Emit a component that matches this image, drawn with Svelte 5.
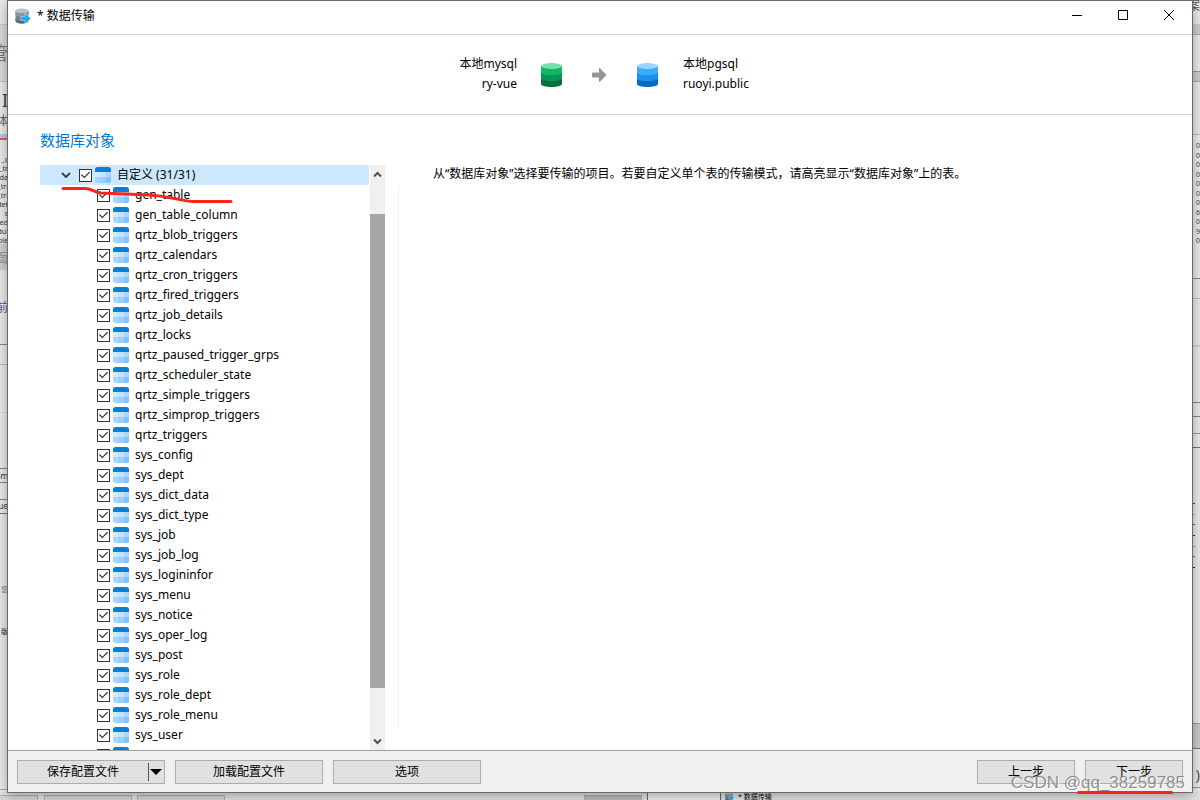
<script>
	const tables = [
		'gen_table',
		'gen_table_column',
		'qrtz_blob_triggers',
		'qrtz_calendars',
		'qrtz_cron_triggers',
		'qrtz_fired_triggers',
		'qrtz_job_details',
		'qrtz_locks',
		'qrtz_paused_trigger_grps',
		'qrtz_scheduler_state',
		'qrtz_simple_triggers',
		'qrtz_simprop_triggers',
		'qrtz_triggers',
		'sys_config',
		'sys_dept',
		'sys_dict_data',
		'sys_dict_type',
		'sys_job',
		'sys_job_log',
		'sys_logininfor',
		'sys_menu',
		'sys_notice',
		'sys_oper_log',
		'sys_post',
		'sys_role',
		'sys_role_dept',
		'sys_role_menu',
		'sys_user',
		'sys_user_post'
	];

	let items = $state(tables.map((name) => ({ name, checked: true })));
	let allChecked = $state(true);
	let open = $state(true);

	function toggleAll() {
		for (const item of items) item.checked = allChecked;
	}

	// Bits of the windows behind the dialog that stick out at its edges
	const leftLines = [
		{ y: 24, h: 1, color: '#c8c8c8' },
		{ y: 25, h: 56, color: '#dcdcdc' },
		{ y: 81, h: 1, color: '#c4c4c4' },
		{ y: 134, h: 4, color: '#b4cde4' },
		{ y: 138, h: 2, color: '#e0605a' },
		{ y: 244, h: 26, color: '#d2d2d2' },
		{ y: 344, h: 1, color: '#888' },
		{ y: 364, h: 1, color: '#bbb' },
		{ y: 412, h: 1, color: '#ddd' },
		{ y: 468, h: 1, color: '#888' },
		{ y: 482, h: 1, color: '#888' },
		{ y: 499, h: 1, color: '#888' },
		{ y: 513, h: 1, color: '#777' },
		{ y: 789, h: 1, color: '#aaa' }
	];
	const leftTexts = [
		{ y: 53, size: 18, text: '管', color: '#777' },
		{ y: 100, size: 18, text: 'I', color: '#445' },
		{ y: 121, size: 12, text: '体', color: '#666' },
		...['_c', '_tr', 'nda', '_tri', '_tri', 'det', 's', 'sed', 'dul', 'ble'].map((text, i) => ({
			y: 160 + i * 9,
			size: 7,
			text,
			color: '#333'
		})),
		{ y: 257, size: 13, text: '面', color: '#a8988c' },
		{ y: 308, size: 12, text: '前', color: '#6450a0' },
		{ y: 476, size: 8, text: '3m', color: '#333' },
		{ y: 506, size: 8, text: 'ue', color: '#333' },
		{ y: 590, size: 7, text: '您', color: '#777' },
		{ y: 632, size: 7, text: '版', color: '#222' }
	];
	const rightLines = [
		{ y: 24, h: 10, color: '#d0d0d0' },
		{ y: 34, h: 1, color: '#aaa' },
		{ y: 71, h: 1, color: '#999' },
		{ y: 72, h: 9, color: '#d0d0d0' },
		{ y: 81, h: 1, color: '#aaa' },
		{ y: 134, h: 1, color: '#bbb' },
		{ y: 278, h: 1, color: '#888' },
		{ y: 298, h: 1, color: '#bbb' },
		{ y: 345, h: 2, color: '#d5d5d5' },
		{ y: 402, h: 1, color: '#888' },
		{ y: 416, h: 1, color: '#888' },
		{ y: 433, h: 1, color: '#999' },
		{ y: 447, h: 1, color: '#777' },
		{ y: 503, h: 1, w: 3, color: '#446' },
		{ y: 514, h: 1, w: 3, color: '#aaa' },
		{ y: 524, h: 1, w: 3, color: '#555' },
		{ y: 535, h: 1, w: 3, color: '#335' },
		{ y: 546, h: 1, w: 3, color: '#999' },
		{ y: 556, h: 1, w: 3, color: '#666' },
		{ y: 567, h: 1, w: 3, color: '#223' },
		{ y: 723, h: 1, color: '#999' },
		{ y: 724, h: 24, color: '#ccc' },
		{ y: 748, h: 1, color: '#777' },
		{ y: 787, h: 1, color: '#999' }
	];
	const rightTexts = [
		{ y: 6, size: 12, text: '案', color: '#555' },
		...['0', '0', '0', '0', '0', '0', '0', '6', '0', '9', '0'].map((text, i) => ({
			y: 146 + Math.round(i * 9.5),
			size: 7,
			text,
			color: '#444'
		})),
		{ y: 774, size: 15, text: ')', color: '#555' }
	];
</script>

{#snippet strip(side, lines, texts)}
	<div class="strip {side}" aria-hidden="true">
		{#each lines as line}
			<i style="top: {line.y}px; width: {line.w ?? 8}px; height: {line.h}px; background: {line.color}"></i>
		{/each}
		{#each texts as t}
			<span style="top: {t.y - 10}px; font-size: {t.size}px; color: {t.color}">{t.text}</span>
		{/each}
	</div>
{/snippet}

{#snippet transferIcon(size)}
	<svg width={size} height={size} viewBox="0 0 16 16" aria-hidden="true">
		<path d="M.500 3v9.500C.500 14.500 3.500 15.500 7 15.500s6.500-1 6.500-3V3z" fill="#79838c" />
		<path d="M.500 3v3.500C.500 8 3.500 9 7 9s6.500-1 6.500-2.500V3z" fill="#8c959d" />
		<path d="M.500 10.500c0 1.500 3 2.500 6.500 2.500s6.500-1 6.500-2.500v2c0 2-3 3-6.500 3s-6.500-1-6.500-3z" fill="#5b6670" />
		<ellipse cx="7" cy="2.800" rx="6.500" ry="2.300" fill="#b9c0c6" />
		<path d="M6 8.500h4V5.300l6 5.200-6 5.200v-3.200H6z" fill="#1eaaf6" stroke="#fff" stroke-width=".4" />
	</svg>
{/snippet}

{#snippet database(top, high, mid, low)}
	<svg width="21" height="24" viewBox="0 0 21 24" aria-hidden="true">
		<path d="M0 15v6c0 4 21 4 21 0v-6z" fill={low} />
		<path d="M0 9v6.500c0 3.500 21 3.500 21 0V9z" fill={mid} />
		<path d="M0 3v6.500c0 3.500 21 3.500 21 0V3z" fill={high} />
		<ellipse cx="10.500" cy="3" rx="10.500" ry="3" fill={top} />
	</svg>
{/snippet}

{#snippet tableIcon()}
	<svg width="16" height="16" viewBox="0 0 16 16" aria-hidden="true">
		<path d="M0 5h16v8.500a2.500 2.500 0 0 1-2.500 2.500h-11A2.500 2.500 0 0 1 0 13.500z" fill="#a8d6ff" />
		<path d="M0 5h5v5H0z" fill="#cfe9ff" />
		<path d="M5 5h6v5H5z" fill="#c4e3ff" />
		<path d="M11 5h5v5h-5z" fill="#a9d7ff" />
		<path d="M5 10h6v6H5z" fill="#98cfff" />
		<path d="M11 10h5v3.500a2.500 2.500 0 0 1-2.500 2.500H11z" fill="#80c3ff" />
		<path d="M2.500 0h11A2.500 2.500 0 0 1 16 2.500V5H0V2.500A2.500 2.500 0 0 1 2.500 0z" fill="#0a7fd6" />
	</svg>
{/snippet}

<div class="desktop">
	{@render strip('left', leftLines, leftTexts)}
	{@render strip('right', rightLines, rightTexts)}
	<div class="below" aria-hidden="true">
		<i class="button-top one"></i>
		<i class="button-top two"></i>
		<i class="button-top three"></i>
		<i class="button-top four"></i>
		<i class="gap"></i>
		<div class="other-title">{@render transferIcon(9)}<span>* 数据传输</span></div>
	</div>

	<main class="window">
		<header class="titlebar">
			{@render transferIcon(16)}
			<h1>* 数据传输</h1>
			<div class="controls">
				<button aria-label="最小化">
					<svg width="10" height="11" viewBox="0 0 10 11"><path d="M0 5.500h10" /></svg>
				</button>
				<button aria-label="最大化">
					<svg width="10" height="11" viewBox="0 0 10 11"><path d="M.5.500h9v9h-9z" /></svg>
				</button>
				<button aria-label="关闭">
					<svg width="10" height="11" viewBox="0 0 10 11"><path d="M0 0l10 10M10 0L0 10" /></svg>
				</button>
			</div>
		</header>

		<section class="route">
			<div class="endpoint source">
				<div>本地mysql</div>
				<div>ry-vue</div>
			</div>
			<div class="route-icons">
				{@render database('#77dfaa', '#12b766', '#079653', '#04713d')}
				<svg width="15" height="14" viewBox="0 0 15 14" aria-hidden="true">
					<path d="M1 4.500h6V1q0-1.500 1.200-.5L14.500 7l-6.300 6.500Q7 14.500 7 13V9.500H1q-1 0-1-1v-3q0-1 1-1z" fill="#969696" />
				</svg>
				{@render database('#9ad6ff', '#38adff', '#1a90ea', '#0569c4')}
			</div>
			<div class="endpoint">
				<div>本地pgsql</div>
				<div>ruoyi.public</div>
			</div>
		</section>

		<section class="content">
			<div class="objects">
				<h2>数据库对象</h2>
				<div class="list">
					<div class="tree">
						<div class="row root">
							<button class="toggle" aria-label="展开" aria-expanded={open} onclick={() => (open = !open)}>
								<svg width="10" height="6" viewBox="0 0 10 6"><path d="M1 1l4 4 4-4" /></svg>
							</button>
							<label>
								<input type="checkbox" bind:checked={allChecked} onchange={toggleAll} />
								{@render tableIcon()}
								<span>自定义 (31/31)</span>
							</label>
						</div>
						{#if open}
							{#each items as item (item.name)}
								<div class="row">
									<label>
										<input type="checkbox" bind:checked={item.checked} />
										{@render tableIcon()}
										<span>{item.name}</span>
									</label>
								</div>
							{/each}
						{/if}
						<svg class="mark" width="172" height="20" viewBox="0 0 172 20" aria-hidden="true">
							<path d="M2 3.500h22c7 0 9 4 16 4.500l48 2c20 1 26 5 44 6.500h38" />
						</svg>
					</div>
					<div class="scrollbar">
						<button aria-label="向上滚动">
							<svg width="9" height="7" viewBox="0 0 9 7"><path d="M1 5.500l3.500-3.500L8 5.500" /></svg>
						</button>
						<div class="track"><div class="thumb"></div></div>
						<button aria-label="向下滚动">
							<svg width="9" height="7" viewBox="0 0 9 7"><path d="M1 1.500L4.500 5 8 1.500" /></svg>
						</button>
					</div>
				</div>
			</div>
			<div class="detail">
				<p>从“数据库对象”选择要传输的项目。若要自定义单个表的传输模式，请高亮显示“数据库对象”上的表。</p>
			</div>
		</section>

		<footer class="actions">
			<div class="split">
				<button class="save">保存配置文件</button>
				<button class="more" aria-label="更多">
					<svg width="12" height="6" viewBox="0 0 12 6"><path d="M0 0h12L6 6z" /></svg>
				</button>
			</div>
			<button class="btn wide">加载配置文件</button>
			<button class="btn wide">选项</button>
			<div class="steps">
				<button class="btn">上一步</button>
				<button class="btn">下一步</button>
			</div>
		</footer>
	</main>

	<div class="watermark">CSDN @qq_38259785</div>
	<div class="underline"></div>
</div>

<style>
	:global(body) {
		margin: 0;
	}

	.desktop {
		position: relative;
		display: flex;
		box-sizing: border-box;
		height: 100vh;
		padding: 0 7px 7px;
		overflow: hidden;
		background: #ededed;
		color: #000;
		font-family: 'Noto Sans', 'Noto Sans CJK SC', sans-serif;
		font-size: 12px;
		line-height: 20px;
	}

	button {
		padding: 0;
		border: 0;
		background: none;
		color: inherit;
		font: inherit;
	}

	svg {
		display: block;
		flex: none;
	}

	/* Windows behind the dialog */
	.strip {
		position: absolute;
		top: 0;
		bottom: 0;
		width: 8px;
		overflow: hidden;
	}

	.left {
		left: 0;
	}

	.right {
		right: 0;
	}

	.strip i {
		position: absolute;
		left: 0;
	}

	.strip span {
		position: absolute;
		right: 0;
		line-height: 20px;
		white-space: nowrap;
	}

	.below {
		position: absolute;
		left: 0;
		right: 0;
		bottom: 0;
		height: 8px;
		overflow: hidden;
		background: #e2e2e2;
	}

	.button-top {
		position: absolute;
		top: 3px;
		height: 8px;
		border: 1px solid #b0b0b0;
		background: #d6d6d6;
	}

	.one {
		left: -2px;
		width: 38px;
	}

	.two {
		left: 44px;
		width: 86px;
	}

	.three {
		left: 137px;
		width: 86px;
	}

	.four {
		left: 584px;
		width: 56px;
		background: #bbb;
	}

	.gap {
		position: absolute;
		top: 0;
		left: 647px;
		width: 72px;
		height: 8px;
		border: solid #666;
		border-width: 0 1px;
		background: #eee;
	}

	.other-title {
		position: absolute;
		top: 0;
		left: 725px;
		display: flex;
		gap: 4px;
		font-size: 7px;
		line-height: 9px;
	}

	/* Dialog */
	.window {
		position: relative;
		display: flex;
		flex: 1;
		flex-direction: column;
		min-width: 0;
		border: 1px solid #6b6b6b;
		background: #fff;
		box-shadow: 0 2px 12px rgba(0, 0, 0, 0.35);
	}

	.titlebar {
		display: flex;
		align-items: center;
		height: 33px;
		padding-left: 7px;
		border-bottom: 1px solid #d4d4d4;
	}

	.titlebar h1 {
		margin: 0 auto 4px 6px;
		font-size: 12px;
		font-weight: 400;
	}

	.titlebar > svg {
		margin-bottom: 4px;
	}

	.controls {
		display: flex;
		align-self: stretch;
	}

	.controls button {
		display: flex;
		align-items: center;
		justify-content: center;
		width: 46px;
		padding-bottom: 4px;
	}

	.controls path {
		fill: none;
		stroke: #000;
	}

	.route {
		display: flex;
		align-items: center;
		justify-content: center;
		height: 79px;
		border-bottom: 1px solid #d4d4d4;
	}

	.endpoint {
		flex: 1;
		padding-bottom: 2px;
	}

	.source {
		text-align: right;
	}

	.route-icons {
		display: flex;
		align-items: center;
		gap: 30px;
		margin: 0 25px 0 24px;
	}

	.content {
		display: flex;
		flex: 1;
		min-height: 0;
	}

	.objects {
		display: flex;
		flex-direction: column;
		width: 345px;
		margin-left: 32px;
	}

	h2 {
		margin: 14px 0 14px;
		color: #0078d7;
		font-size: 15px;
		font-weight: 400;
		line-height: 22px;
	}

	.list {
		display: flex;
		flex: 1;
		min-height: 0;
	}

	.tree {
		position: relative;
		flex: 1;
		overflow: hidden;
	}

	.row {
		display: flex;
		align-items: center;
		height: 20px;
		padding-left: 57px;
	}

	.root {
		margin-right: 1px;
		padding-left: 21px;
		background: #cce8ff;
	}

	.row label {
		display: flex;
		align-items: center;
		white-space: nowrap;
	}

	.row span {
		margin-left: 6px;
	}

	.toggle {
		width: 12px;
		margin-right: 6px;
	}

	.toggle path {
		fill: none;
		stroke: #404040;
		stroke-width: 2;
	}

	input {
		position: relative;
		box-sizing: border-box;
		width: 13px;
		height: 13px;
		margin: 0 3px 0 0;
		appearance: none;
		border: 1px solid #333;
		background: #fff;
	}

	input:checked::after {
		content: '';
		position: absolute;
		inset: 1px;
		background: #222;
		clip-path: polygon(0 50%, 9% 41%, 37% 69%, 91% 14%, 100% 23%, 37% 86%);
	}

	.mark {
		position: absolute;
		top: 20px;
		left: 21px;
	}

	.mark path,
	.scrollbar path {
		fill: none;
		stroke: #505050;
		stroke-width: 2;
	}

	.mark path {
		stroke: #fb2418;
		stroke-width: 3;
		stroke-linecap: round;
	}

	.scrollbar {
		display: flex;
		flex-direction: column;
		width: 15px;
		background: #f0f0f0;
	}

	.scrollbar button {
		display: flex;
		align-items: center;
		justify-content: center;
		height: 18px;
	}

	.track {
		display: flex;
		flex: 1;
		flex-direction: column;
	}

	.track::before {
		content: '';
		flex: 31;
	}

	.track::after {
		content: '';
		flex: 44;
	}

	.thumb {
		flex: 474;
		background: #a6a6a6;
	}

	.detail {
		flex: 1;
		margin: 70px 0 22px 13px;
		border-left: 1px solid #f0f0f0;
	}

	.detail p {
		margin: -21px 0 0 34px;
	}

	.actions {
		display: flex;
		gap: 10px;
		padding: 9px 9px 8px;
		border-top: 1px solid #a0a0a0;
		background: #f0f0f0;
	}

	.btn,
	.split {
		box-sizing: border-box;
		width: 98px;
		height: 24px;
		border: 1px solid #adadad;
		background: #e1e1e1;
	}

	.wide,
	.split {
		width: 148px;
	}

	.split {
		display: flex;
	}

	.save {
		flex: 1;
	}

	.more {
		width: 16px;
		margin: 2px 0;
		padding-left: 1px;
		border-left: 1px solid #555;
	}

	.steps {
		display: flex;
		gap: 10px;
		margin-left: auto;
	}

	.watermark {
		position: absolute;
		right: 15px;
		bottom: 7px;
		color: rgba(110, 110, 110, 0.75);
		font-family: 'Liberation Sans', sans-serif;
		font-size: 17px;
		text-shadow: 1px 1px 1px #fff;
		pointer-events: none;
	}

	.underline {
		position: absolute;
		right: 27px;
		bottom: 6px;
		width: 96px;
		height: 3px;
		border-radius: 2px;
		background: #fb2418;
	}
</style>
